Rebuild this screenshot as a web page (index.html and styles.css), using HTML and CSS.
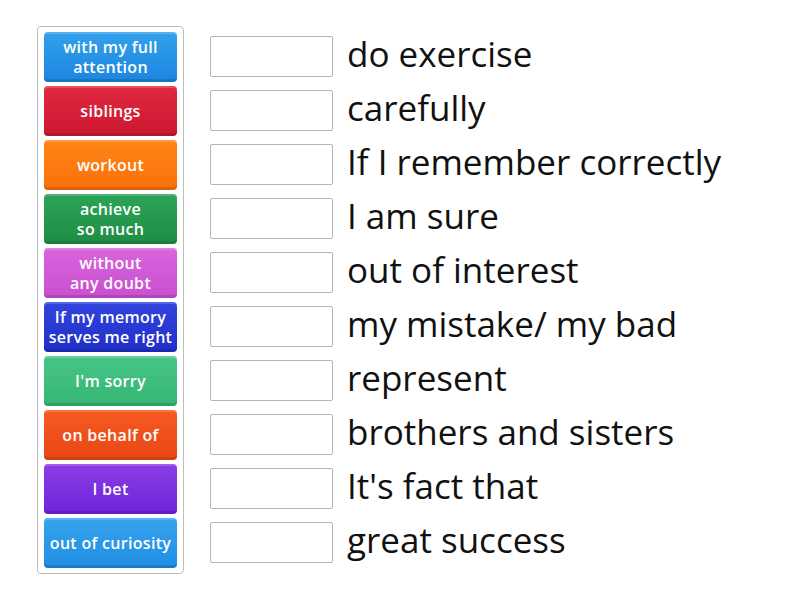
FILE: index.html
```html
<!DOCTYPE html>
<html lang="en">
<head>
    <meta charset="UTF-8">
    <title>Match up</title>
    <link rel="stylesheet" href="styles.css">
</head>
<body>
    <div class="board">
        <div class="tiles">
            <div class="tile blue">with my full<br>attention</div>
            <div class="tile red">siblings</div>
            <div class="tile orange">workout</div>
            <div class="tile green">achieve<br>so much</div>
            <div class="tile pink">without<br>any doubt</div>
            <div class="tile navy">If my memory<br>serves me right</div>
            <div class="tile mint">I'm sorry</div>
            <div class="tile flame">on behalf of</div>
            <div class="tile purple">I bet</div>
            <div class="tile sky">out of curiosity</div>
        </div>
        <div class="answers">
            <div class="row"><div class="slot"></div><span class="label">do exercise</span></div>
            <div class="row"><div class="slot"></div><span class="label">carefully</span></div>
            <div class="row"><div class="slot"></div><span class="label">If I remember correctly</span></div>
            <div class="row"><div class="slot"></div><span class="label">I am sure</span></div>
            <div class="row"><div class="slot"></div><span class="label">out of interest</span></div>
            <div class="row"><div class="slot"></div><span class="label">my mistake/ my bad</span></div>
            <div class="row"><div class="slot"></div><span class="label">represent</span></div>
            <div class="row"><div class="slot"></div><span class="label">brothers and sisters</span></div>
            <div class="row"><div class="slot"></div><span class="label">It's fact that</span></div>
            <div class="row"><div class="slot"></div><span class="label">great success</span></div>
        </div>
    </div>
</body>
</html>
```
FILE: styles.css
```css
body {
    margin: 0;
    font-family: "Open Sans", "Noto Sans", sans-serif;
    background: #fff;
}
.board {
    display: flex;
    padding: 26px 0 0 37px;
}
.tiles {
    display: flex;
    flex-direction: column;
    gap: 4px;
    width: 133px;
    padding: 5px 6px;
    border: 1px solid #bdbdbd;
    border-radius: 4px;
}
.tile {
    height: 50px;
    border-radius: 4px;
    display: flex;
    align-items: center;
    justify-content: center;
    text-align: center;
    color: #fff;
    font-size: 16px;
    font-weight: 600;
    line-height: 20px;
    letter-spacing: 0.3px;
    white-space: nowrap;
    box-shadow: inset 0 2px 0 rgba(255, 255, 255, 0.18), inset 0 -3px 0 rgba(0, 0, 0, 0.12);
}
.blue { background: linear-gradient(#33a0ec, #1c86e0); }
.red { background: linear-gradient(#e0293f, #cc1732); }
.orange { background: linear-gradient(#ff8516, #fa700b); }
.green { background: linear-gradient(#2ba457, #1f8d44); }
.pink { background: linear-gradient(#d864dc, #c94fd0); }
.navy { background: linear-gradient(#3344de, #1f2fc8); }
.mint { background: linear-gradient(#47c588, #35b672); }
.flame { background: linear-gradient(#f75a22, #e84714); }
.purple { background: linear-gradient(#8a3ce6, #7124d8); }
.sky { background: linear-gradient(#36a3ec, #1f8ee4); }
.answers {
    display: flex;
    flex-direction: column;
    gap: 13px;
    padding: 10px 0 0 26px;
}
.row {
    display: flex;
    align-items: center;
    gap: 14px;
    height: 41px;
}
.slot {
    flex: none;
    width: 121px;
    height: 39px;
    border: 1px solid #b5b5b5;
    border-radius: 2px;
    background: #fff;
}
.label {
    font-size: 35px;
    line-height: 41px;
    color: #111;
    white-space: nowrap;
    margin-top: -6px;
}
```
